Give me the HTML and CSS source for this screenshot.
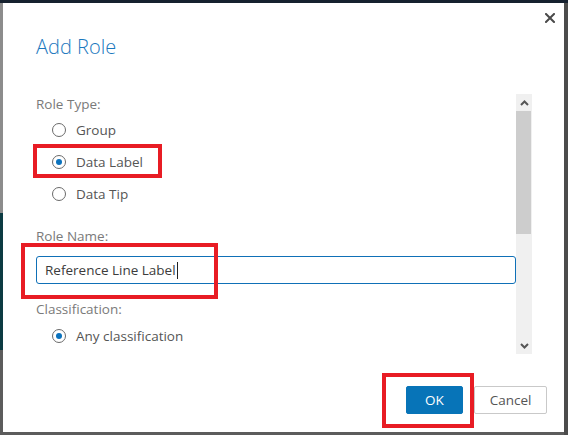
FILE: index.html
```html
<!DOCTYPE html>
<html lang="en">
<head>
<meta charset="utf-8">
<title>Add Role</title>
<link rel="stylesheet" href="styles.css">
</head>
<body>
<div class="dialog">
  <div class="dlg-header">
    <h1 class="dlg-title">Add Role</h1>
    <button class="dlg-close" aria-label="Close">
      <svg width="10" height="10" viewBox="0 0 10 10"><path d="M1 1L9 9M9 1L1 9" stroke="#4a4a4a" stroke-width="2" stroke-linecap="square" fill="none"/></svg>
    </button>
  </div>
  <div class="dlg-body">
    <div class="scroll-content">
      <div class="field-label first">Role Type:</div>
      <div class="radio-group">
        <div class="radio-row"><span class="radio"></span><span class="radio-text">Group</span></div>
        <div class="radio-row"><span class="radio checked"></span><span class="radio-text">Data Label</span></div>
        <div class="radio-row"><span class="radio"></span><span class="radio-text">Data Tip</span></div>
      </div>
      <div class="field-label name-label">Role Name:</div>
      <div class="text-input"><span class="input-value">Reference Line Label</span><span class="caret"></span></div>
      <div class="field-label class-label">Classification:</div>
      <div class="radio-group class-group">
        <div class="radio-row"><span class="radio checked"></span><span class="radio-text">Any classification</span></div>
      </div>
    </div>
    <div class="scrollbar">
      <div class="sb-btn">
        <svg width="9" height="6" viewBox="0 0 9 6"><path d="M1 5L4.5 1.5L8 5" stroke="#555" stroke-width="2" fill="none"/></svg>
      </div>
      <div class="sb-track"><div class="sb-thumb"></div></div>
      <div class="sb-btn sb-down">
        <svg width="9" height="6" viewBox="0 0 9 6"><path d="M1 1L4.5 4.5L8 1" stroke="#555" stroke-width="2" fill="none"/></svg>
      </div>
    </div>
  </div>
  <div class="dlg-footer">
    <button class="btn btn-primary">OK</button>
    <button class="btn btn-secondary">Cancel</button>
  </div>
</div>
<div class="callout callout-datalabel"></div>
<div class="callout callout-rolename"></div>
<div class="callout callout-ok"></div>
</body>
</html>
```
FILE: styles.css
```css
html, body {
  margin: 0;
  padding: 0;
}
body {
  width: 568px;
  height: 435px;
  padding: 3px;
  box-sizing: border-box;
  position: relative;
  overflow: hidden;
  font-family: "Open Sans", "Liberation Sans", sans-serif;
  background:
    linear-gradient(#16212f, #16212f) 0 0 / 100% 3px no-repeat,
    linear-gradient(#0c3b42, #0c3b42) 0 213px / 3px 137px no-repeat,
    linear-gradient(#8c8c8c, #8c8c8c) 0 0 / 3px 213px no-repeat,
    linear-gradient(#4c4c4c, #4c4c4c) 564px 0 / 4px 100% no-repeat,
    #5c5c5c;
}
.dialog {
  width: 561px;
  height: 429px;
  background: #fff;
  display: flex;
  flex-direction: column;
}
.dlg-header {
  display: flex;
  justify-content: space-between;
  align-items: flex-start;
  padding: 10px 9px 0 33px;
}
.dlg-title {
  margin: 21.5px 0 35.5px 0;
  font-size: 20px;
  line-height: 24px;
  font-weight: 300;
  color: #1a78be;
}
.dlg-close {
  border: 0;
  padding: 0;
  margin: 0;
  background: none;
  width: 10px;
  height: 10px;
  display: block;
}
.dlg-close svg {
  display: block;
}
.dlg-body {
  display: flex;
  height: 260px;
  padding: 0 32px 0 33px;
}
.scroll-content {
  width: 480px;
  padding-top: 1px;
  font-size: 13.5px;
  line-height: 18px;
}
.field-label {
  color: #7a7a7a;
}
.field-label.first {
  margin-bottom: 1px;
}
.name-label {
  margin-top: 17px;
  margin-bottom: 11px;
}
.class-label {
  margin-top: 16px;
}
.class-group {
  margin-top: 2px;
}
.radio-row {
  height: 32px;
  display: flex;
  align-items: center;
  padding-left: 16px;
}
.radio {
  width: 14px;
  height: 14px;
  box-sizing: border-box;
  border: 1px solid #6a6a6a;
  border-radius: 50%;
  margin-right: 10px;
  display: flex;
  align-items: center;
  justify-content: center;
}
.radio.checked::after {
  content: "";
  width: 6px;
  height: 6px;
  border-radius: 50%;
  background: #0b72bd;
}
.radio-text {
  color: #555;
}
.text-input {
  height: 28px;
  box-sizing: border-box;
  border: 1px solid #0f70b7;
  border-radius: 3px;
  padding-left: 8px;
  display: flex;
  align-items: center;
  color: #3c3c3c;
}
.caret {
  width: 1px;
  height: 17px;
  background: #222;
  margin-left: 1px;
}
.scrollbar {
  width: 16px;
  background: #f0f0f0;
  display: flex;
  flex-direction: column;
}
.sb-btn {
  height: 17px;
  display: flex;
  align-items: center;
  justify-content: center;
}
.sb-btn svg {
  display: block;
}
.sb-down {
  height: 16px;
}
.sb-track {
  flex: 1;
}
.sb-thumb {
  width: 15px;
  height: 123px;
  background: #cdcdcd;
}
.dlg-footer {
  display: flex;
  justify-content: flex-end;
  gap: 11px;
  padding-right: 17px;
  margin-top: 32px;
}
.btn {
  height: 28px;
  box-sizing: border-box;
  border-radius: 2px;
  font-family: "Open Sans", "Liberation Sans", sans-serif;
  font-size: 13.5px;
  padding: 0;
  margin: 0;
}
.btn-primary {
  width: 57px;
  background: #0774b8;
  border: 1px solid #0774b8;
  color: #fff;
}
.btn-secondary {
  width: 73px;
  background: #fff;
  border: 1px solid #c9c9c9;
  color: #555;
}
.callout {
  position: absolute;
  border: 4px solid #e81c24;
  box-sizing: border-box;
}
.callout-datalabel {
  left: 33px;
  top: 144px;
  width: 129px;
  height: 34px;
}
.callout-rolename {
  left: 21px;
  top: 243px;
  width: 197px;
  height: 56px;
}
.callout-ok {
  left: 382px;
  top: 373px;
  width: 92px;
  height: 55px;
}
```
